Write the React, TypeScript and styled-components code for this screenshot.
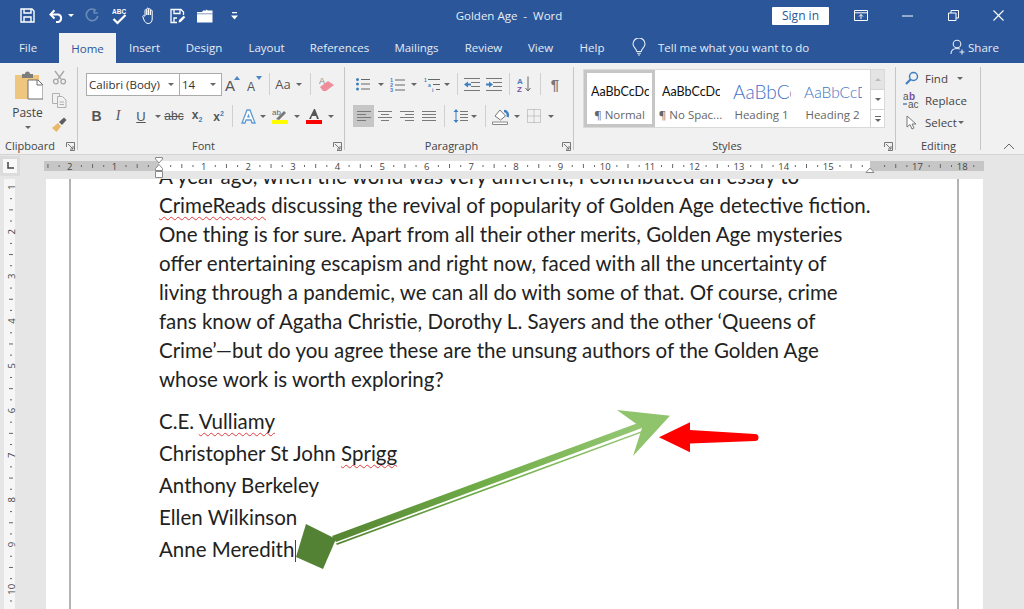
import React from "react";
import styled, { createGlobalStyle } from "styled-components";

const Global = createGlobalStyle`
  html, body { margin: 0; padding: 0; overflow: hidden; background: #e6e6e6; }
  * { box-sizing: border-box; }
`;

const UI_FONT = `"Open Sans", "Noto Sans", sans-serif`;

const Window = styled.div`
  position: relative;
  width: 1024px;
  height: 609px;
  overflow: hidden;
  display: flex;
  flex-direction: column;
  font-family: ${UI_FONT};
`;

const TitleBar = styled.div`
  height: 31px;
  background: #2b579a;
  display: flex;
  align-items: center;
  color: #fff;
  flex-shrink: 0;
`;

const Slot = styled.span<{ $w: number; $h?: number }>`
  width: ${(p) => p.$w}px;
  ${(p) => (p.$h ? `height: ${p.$h}px;` : "")}
  flex-shrink: 0;
  display: flex;
  align-items: center;
  justify-content: center;
`;

const Title = styled.div`
  width: 524px;
  text-align: center;
  font-size: 11.5px;
  color: #e8edf5;
  white-space: pre;
`;

const SignIn = styled.button`
  width: 57px;
  height: 18px;
  border: 0;
  border-radius: 1px;
  background: #fff;
  color: #2b579a;
  font: 12px ${UI_FONT};
  padding: 0;
`;

const TabBar = styled.div`
  height: 32px;
  background: #2b579a;
  display: flex;
  align-items: stretch;
  flex-shrink: 0;
`;

const Tab = styled.div<{ $w: number; $active?: boolean }>`
  width: ${(p) => p.$w}px;
  display: flex;
  align-items: center;
  justify-content: center;
  font-size: 11.5px;
  color: ${(p) => (p.$active ? "#2b579a" : "#e6ebf4")};
  background: ${(p) => (p.$active ? "#f1f1f1" : "transparent")};
  margin-top: ${(p) => (p.$active ? "2px" : "0")};
  flex-shrink: 0;
  white-space: nowrap;
`;

const TellMe = styled.div`
  display: flex;
  align-items: center;
  font-size: 11.5px;
  color: #e6ebf4;
  width: 290px;
  flex-shrink: 0;
`;

const Ribbon = styled.div`
  height: 92px;
  background: #f1f1f1;
  border-bottom: 1px solid #d4d4d4;
  display: flex;
  flex-shrink: 0;
`;

const Group = styled.div<{ $w: number }>`
  position: relative;
  width: ${(p) => p.$w}px;
  height: 87px;
  margin-top: 4px;
  flex-shrink: 0;
  display: flex;
  flex-direction: column;

  &::after {
    content: "";
    position: absolute;
    right: 0;
    top: 0;
    bottom: 4px;
    width: 1px;
    background: #c6c6c6;
  }
`;

const GroupBody = styled.div`
  flex: 1;
  display: flex;
  min-height: 0;
`;

const GroupLabel = styled.div<{ $pr?: number }>`
  height: 16px;
  line-height: 16px;
  text-align: center;
  font-size: 11px;
  color: #444;
  padding-right: ${(p) => p.$pr ?? 16}px;
`;

const Launcher = styled.svg`
  position: absolute;
  right: 3px;
  bottom: 3px;
  width: 9px;
  height: 9px;
`;

const Column = styled.div`
  display: flex;
  flex-direction: column;
`;

const Row = styled.div<{ $h?: number; $pl?: number }>`
  display: flex;
  align-items: center;
  height: ${(p) => p.$h ?? 31}px;
  padding-left: ${(p) => p.$pl ?? 0}px;
`;

const PasteColumn = styled(Column)`
  width: 50px;
  align-items: center;
  padding-left: 5px;
  font-size: 12px;
  color: #444;
`;

const Combo = styled.div<{ $w: number }>`
  width: ${(p) => p.$w}px;
  height: 23px;
  border: 1px solid #ababab;
  background: #fff;
  font-size: 11.5px;
  color: #333;
  display: flex;
  align-items: center;
  justify-content: space-between;
  padding: 0 5px 0 2px;
  margin-right: -1px;
  flex-shrink: 0;
`;

const Caret = styled.i<{ $color?: string; $up?: boolean }>`
  display: block;
  width: 0;
  height: 0;
  border-left: 3px solid transparent;
  border-right: 3px solid transparent;
  ${(p) =>
    p.$up
      ? `border-bottom: 3px solid ${p.$color ?? "#666"};`
      : `border-top: 3px solid ${p.$color ?? "#666"};`}
`;

const Sep = styled.span<{ $h?: number }>`
  width: 1px;
  height: ${(p) => p.$h ?? 22}px;
  background: #d0d0d0;
  flex-shrink: 0;
`;

const Glyph = styled.span<{ $weight?: number; $italic?: boolean; $size?: number; $color?: string; $family?: string; $deco?: string }>`
  font-family: ${(p) => p.$family ?? `"Liberation Sans", sans-serif`};
  font-weight: ${(p) => p.$weight ?? 400};
  font-style: ${(p) => (p.$italic ? "italic" : "normal")};
  font-size: ${(p) => p.$size ?? 13}px;
  color: ${(p) => p.$color ?? "#555"};
  text-decoration: ${(p) => p.$deco ?? "none"};
  line-height: 1;
`;

const Index = styled.span`
  color: #3f7fbf;
  font-size: 7px;
`;

const ActiveBox = styled(Slot)`
  height: 22px;
  background: #c6c6c6;
`;

const Gallery = styled.div`
  margin: 2px 0 0 9px;
  width: 302px;
  height: 59px;
  background: #fff;
  border: 1px solid #d9d9d9;
  display: flex;
  flex-shrink: 0;
`;

const StyleCard = styled.div<{ $selected?: boolean }>`
  width: 71px;
  flex-shrink: 0;
  overflow: hidden;
  display: flex;
  flex-direction: column;
  border: 3px solid ${(p) => (p.$selected ? "#c6c6c6" : "transparent")};
  background: #fff;
`;

const StylePreview = styled.div<{ $size: number; $color: string; $light?: boolean }>`
  height: 33px;
  width: 58px;
  margin: 2px 0 0 4px;
  overflow: hidden;
  white-space: nowrap;
  display: flex;
  align-items: center;
  font-family: "Lato", "Liberation Sans", sans-serif;
  font-weight: ${(p) => (p.$light ? 300 : 400)};
  font-size: ${(p) => p.$size}px;
  color: ${(p) => p.$color};
`;

const StyleName = styled.div`
  font-size: 11.5px;
  line-height: 14px;
  color: #666;
  white-space: nowrap;
  text-align: center;
`;

const Scroller = styled(Column)`
  margin-left: auto;
  width: 14px;
  border-left: 1px solid #d4d4d4;
`;

const ScrollButton = styled.div<{ $h: number; $off?: boolean }>`
  height: ${(p) => p.$h}px;
  display: flex;
  flex-direction: column;
  gap: 2px;
  align-items: center;
  justify-content: center;
  background: ${(p) => (p.$off ? "#e4e4e4" : "#fff")};
  border-bottom: 1px solid #d4d4d4;
  &:last-child { border-bottom: 0; }
`;

const ScrollBarLine = styled.i`
  display: block;
  width: 6px;
  height: 1px;
  background: #666;
`;

const EditRow = styled.div`
  height: 22px;
  display: flex;
  align-items: center;
  font-size: 11.5px;
  color: #444;
`;

const CollapseRibbon = styled.svg`
  margin: 80px 0 0 22px;
  width: 12px;
  height: 7px;
`;

const RulerBar = styled.div`
  height: 24px;
  padding-bottom: 3px;
  background: #e6e6e6;
  display: flex;
  align-items: center;
  flex-shrink: 0;
`;

const TabStop = styled.div`
  width: 20px;
  height: 20px;
  background: #f8f8f8;
  border: 3px solid #dcdcdc;
  display: flex;
  align-items: center;
  justify-content: center;
  flex-shrink: 0;
`;

const RulerTrack = styled.svg`
  margin-left: 24px;
  width: 940px;
  height: 10px;
  flex-shrink: 0;
`;

const Workspace = styled.div`
  flex: 1;
  display: flex;
  min-height: 0;
  background: #e6e6e6;
`;

const SideRuler = styled.svg`
  width: 46px;
  height: 431px;
  flex-shrink: 0;
`;

const Sheet = styled.div`
  width: 937px;
  background: #fff;
  flex-shrink: 0;
  padding-left: 23px;
  overflow: hidden;
  display: flex;
`;

const TextFrame = styled.div`
  width: 890px;
  border-left: 2px solid #b4b4b4;
  border-right: 2px solid #b4b4b4;
  padding-left: 88px;
  font-family: "Lato", "Liberation Sans", sans-serif;
  font-size: 20.5px;
  color: #222;
`;

const Paragraph = styled.p`
  margin: -17px 0 11px;
  line-height: 29px;
  white-space: nowrap;
`;

const ListLine = styled.div`
  height: 32px;
  line-height: 32px;
  white-space: nowrap;
`;

const Squiggle = styled.span`
  text-decoration: underline wavy #e23b3b 1px;
  text-underline-offset: 3px;
  text-decoration-skip-ink: none;
`;

const TextCaret = styled.span`
  display: inline-block;
  width: 1px;
  height: 22px;
  margin-left: 1px;
  background: #444;
  vertical-align: -5px;
`;

const Overlay = styled.svg`
  position: absolute;
  left: 0;
  top: 0;
  width: 1024px;
  height: 609px;
  pointer-events: none;
`;

// icons

const SaveIcon = () => (
  <svg width="15" height="15" viewBox="0 0 15 15" fill="none" stroke="#fff" strokeWidth="1.4">
    <path d="M1 1h11l2 2v11H1z" />
    <path d="M4 1v4h7V1M4 14V9h7v5" />
  </svg>
);

const UndoIcon = () => (
  <svg width="16" height="14" viewBox="0 0 16 14" fill="none" stroke="#fff" strokeWidth="2">
    <path d="M1.500 5.500h8a4 4 0 0 1 0 7.500H7" />
    <path d="M5.500 1.200 1.500 5.500l4 4" />
  </svg>
);

const RedoIcon = () => (
  <svg width="14" height="15" viewBox="0 0 14 15" fill="none" stroke="#6c8bb8" strokeWidth="1.6">
    <path d="M11 2.500A5.800 5.800 0 1 0 12.800 8" />
    <path d="M9.200 1v4h3.600" />
  </svg>
);

const SpellIcon = () => (
  <svg width="16" height="18" viewBox="0 0 16 18" fill="none">
    <text x="0" y="6.500" fontSize="6.500" fontWeight="700" fontFamily="Liberation Sans" fill="#fff">ABC</text>
    <path d="M1.500 12l4 4 8-8" stroke="#fff" strokeWidth="2.200" />
  </svg>
);

const HandIcon = () => (
  <svg width="13" height="17" viewBox="0 0 13 17" fill="none" stroke="#fff" strokeWidth="1">
    <path d="M3 9V3.500a.9.9 0 0 1 1.800 0V8V2a.9.9 0 0 1 1.800 0v6V2.600a.9.9 0 0 1 1.800 0V8V4a.9.9 0 0 1 1.800 0v8c0 3-1.800 4.500-4 4.500S3 15 2 13L.8 9.600c-.3-1 1-1.400 1.500-.6z" />
  </svg>
);

const SaveAsIcon = () => (
  <svg width="16" height="16" viewBox="0 0 16 16" fill="none" stroke="#fff" strokeWidth="1.3">
    <path d="M7 14.500H1v-13h10l2.500 2.500v3" />
    <path d="M4 1.500v4h6v-4M4 14v-4h3" />
    <path d="M8.500 14.500l.6-2.400 4.600-4.400 1.600 1.600-4.500 4.600z" fill="#fff" stroke="none" />
  </svg>
);

const FolderIcon = () => (
  <svg width="16" height="14" viewBox="0 0 16 14" fill="#fff">
    <path d="M0 3h5l1-1.500h3V.5l2 1h4.500V13.500H0z" />
    <path d="M0 4.800h15.500" stroke="#2b579a" strokeWidth=".6" />
  </svg>
);

const CustomizeIcon = () => (
  <svg width="7" height="8" viewBox="0 0 7 8" fill="#fff">
    <path d="M1 0h5v1.200H1zM0 3.500h7L3.500 7.500z" />
  </svg>
);

const RibbonDisplayIcon = () => (
  <svg width="14" height="11" viewBox="0 0 14 11" fill="none" stroke="#fff">
    <path d="M.5.500h13v10H.5zM.5 2.800h13" />
    <path d="M7 9V4.500M5 6.500l2-2 2 2" />
  </svg>
);

const MinimizeIcon = () => (
  <svg width="11" height="2" viewBox="0 0 11 2"><path d="M0 1h11" stroke="#fff" /></svg>
);

const RestoreIcon = () => (
  <svg width="11" height="11" viewBox="0 0 11 11" fill="none" stroke="#fff">
    <path d="M.5 3h7.500v7.500H.5zM3 3V.5h7.500V8H8" />
  </svg>
);

const CloseIcon = () => (
  <svg width="11" height="11" viewBox="0 0 11 11" stroke="#fff" strokeWidth="1.100">
    <path d="M.5.500l10 10M10.500.500l-10 10" />
  </svg>
);

const BulbIcon = () => (
  <svg width="14" height="18" viewBox="0 0 14 18" fill="none" stroke="#e6ebf4" strokeWidth="1.100">
    <path d="M4.800 13.500C4.500 10.500 1 9.500 1 6a6 6 0 0 1 12 0c0 3.500-3.500 4.500-3.800 7.500z" />
    <path d="M5 15.300h4M6 17h2" />
  </svg>
);

const ShareIcon = () => (
  <svg width="16" height="16" viewBox="0 0 16 16" fill="none" stroke="#e6ebf4" strokeWidth="1.100">
    <circle cx="7" cy="5" r="3.800" />
    <path d="M1 15c0-3.500 2.500-5.500 6-5.500 1 0 2 .2 2.800.6" />
    <path d="M12 10.500v5M9.500 13h5" />
  </svg>
);

const PasteIcon = () => (
  <svg width="30" height="30" viewBox="0 0 30 30">
    <path d="M2 4h24v24H2z" fill="#efc67e" />
    <path d="M9 3h3a2.500 2.500 0 0 1 5 0h3v4H9z" fill="#7d7d7d" />
    <path d="M16 9h10l5 5v14H16z" fill="#fff" stroke="#6e6e6e" transform="translate(-1 0)" />
    <path d="M25 9v5h5" fill="none" stroke="#6e6e6e" transform="translate(-1 0)" />
  </svg>
);

const CutIcon = () => (
  <svg width="15" height="15" viewBox="0 0 15 15" fill="none" stroke="#a6a6a6" strokeWidth="1.300">
    <path d="M3 1l6 8M12 1L6 9" />
    <circle cx="3.800" cy="11.500" r="2.300" />
    <circle cx="11.200" cy="11.500" r="2.300" />
  </svg>
);

const CopyIcon = () => (
  <svg width="15" height="15" viewBox="0 0 15 15" fill="#f1f1f1" stroke="#b0b0b0">
    <path d="M.5.500h7l0 3v7h-7z" />
    <path d="M5.500 3.500h5l3.500 3.500v7.500H5.500z" />
    <path d="M7.500 9h4.500M7.500 11.500h4.500" />
  </svg>
);

const BrushIcon = () => (
  <svg width="16" height="15" viewBox="0 0 16 15">
    <path d="M1 11l6-5 3 3.500-4.500 5.500z" fill="#e8b868" />
    <path d="M8 5l5-4.500 2.500 2.500-4.500 5z" fill="#5f5f5f" />
  </svg>
);

const Launch = () => (
  <Launcher viewBox="0 0 9 9" fill="none" stroke="#777">
    <path d="M.5 5V.5h8v8H4" />
    <path d="M2 2l5 5M7 4v3H4" />
  </Launcher>
);

const GrowIcon = ({ up, size }: { up: boolean; size: number }) => (
  <svg width="18" height="18" viewBox="0 0 18 18">
    <text x="1" y="16" fontSize={size} fontFamily="Liberation Sans" fill="#555">A</text>
    <path d={up ? "M10 5l3-4 3 4z" : "M10 1h6l-3 4z"} fill="#4a86c5" />
  </svg>
);

const EraserIcon = () => (
  <svg width="16" height="16" viewBox="0 0 16 16">
    <text x="0" y="8" fontSize="9" fontFamily="Liberation Sans" fill="#888">A</text>
    <path d="M1 11l8-6 6 4-8 6H4z" fill="#ef8d9a" />
  </svg>
);

const TextEffect = () => (
  <svg width="15" height="15" viewBox="0 0 15 15">
    <path d="M6 1h3l5 13H11l-1-3H5l-1 3H1z" fill="#fff" stroke="#5f9bd5" strokeWidth="1.300" />
    <path d="M6 8.500l1.500-4 1.500 4z" fill="#5f9bd5" />
  </svg>
);

const HighlightIcon = () => (
  <svg width="16" height="16" viewBox="0 0 16 16">
    <text x="0" y="7" fontSize="8" fontFamily="Liberation Sans" fill="#666">ab</text>
    <path d="M4 11l8-8 2 2-7 7z" fill="#777" />
    <path d="M0 12h16v4H0z" fill="#ffff00" />
  </svg>
);

const FontColorIcon = () => (
  <svg width="16" height="16" viewBox="0 0 16 16">
    <path d="M8 1h1l4 10h-2l-1-3H6l-1 3H3z" fill="#555" />
    <path d="M0 12h16v4H0z" fill="#ff0000" />
  </svg>
);

const BulletsIcon = () => (
  <svg width="14" height="14" viewBox="0 0 14 14">
    <circle cx="1.500" cy="2.500" r="1.500" fill="#3f7fbf" />
    <circle cx="1.500" cy="7" r="1.500" fill="#3f7fbf" />
    <circle cx="1.500" cy="12" r="1.500" fill="#3f7fbf" />
    <path d="M5 2.500h9M5 7h9M5 12h9" stroke="#666" />
  </svg>
);

const NumberingIcon = () => (
  <svg width="15" height="15" viewBox="0 0 15 15">
    <text x="0" y="5" fontSize="5.500" fill="#3f7fbf" fontFamily="Liberation Sans" fontWeight="700">1</text>
    <text x="0" y="10" fontSize="5.500" fill="#3f7fbf" fontFamily="Liberation Sans" fontWeight="700">2</text>
    <text x="0" y="15" fontSize="5.500" fill="#3f7fbf" fontFamily="Liberation Sans" fontWeight="700">3</text>
    <path d="M5 3h10M5 8h10M5 13h10" stroke="#666" />
  </svg>
);

const MultilevelIcon = () => (
  <svg width="16" height="15" viewBox="0 0 16 15">
    <text x="0" y="5" fontSize="5" fill="#3f7fbf" fontFamily="Liberation Sans" fontWeight="700">1</text>
    <text x="4" y="10" fontSize="5" fill="#3f7fbf" fontFamily="Liberation Sans" fontWeight="700">a</text>
    <text x="8" y="15" fontSize="5" fill="#3f7fbf" fontFamily="Liberation Sans" fontWeight="700">i</text>
    <path d="M4 2.500h12M9 7.500h7M12 12.500h4" stroke="#666" />
  </svg>
);

const IndentIcon = ({ out }: { out: boolean }) => (
  <svg width="16" height="13" viewBox="0 0 16 13">
    <path d="M0 .500h16M7 4.500h9M7 8.500h9M0 12.500h16" stroke="#777" />
    <path d={out ? "M0 6.500l4-3v2h3v2H4v2z" : "M7 6.500l-4-3v2H0v2h3v2z"} fill="#3f7fbf" />
  </svg>
);

const SortIcon = () => (
  <svg width="16" height="16" viewBox="0 0 16 16">
    <text x="0" y="7.500" fontSize="8" fontWeight="700" fontFamily="Liberation Sans" fill="#3f7fbf">A</text>
    <text x="0" y="15.500" fontSize="8" fontWeight="700" fontFamily="Liberation Sans" fill="#7c4fa3">Z</text>
    <path d="M11 .500v14M8.500 12l2.500 3 2.500-3" stroke="#666" fill="none" />
  </svg>
);

const AlignIcon = ({ kind }: { kind: "left" | "center" | "right" | "justify" }) => {
  const lines = {
    left: [[0, 14], [0, 9], [0, 14], [0, 9]],
    center: [[0, 14], [3, 11], [0, 14], [3, 11]],
    right: [[0, 14], [5, 14], [0, 14], [5, 14]],
    justify: [[0, 14], [0, 14], [0, 14], [0, 14]],
  }[kind];
  return (
    <svg width="14" height="12" viewBox="0 0 14 12" stroke="#7a7a7a">
      {lines.map(([a, b], i) => (
        <path key={i} d={`M${a} ${1.5 + i * 3}H${b}`} />
      ))}
    </svg>
  );
};

const LineSpacingIcon = () => (
  <svg width="15" height="16" viewBox="0 0 15 16">
    <path d="M3 1l2.500 3h-5zM3 15l2.500-3h-5z" fill="#3f7fbf" />
    <path d="M3 3v10" stroke="#3f7fbf" />
    <path d="M7 3.500h8M7 6.500h8M7 9.500h8M7 12.500h8" stroke="#777" />
  </svg>
);

const ShadingIcon = () => (
  <svg width="17" height="17" viewBox="0 0 17 17">
    <path d="M3 8l5-6 5.500 6-5 4z" fill="#fff" stroke="#777" />
    <path d="M12 3c3 0 4.500 3 3.500 6" stroke="#3f7fbf" strokeWidth="2.400" fill="none" />
    <path d="M.5 14h15v2.500H.5z" fill="#fff" stroke="#888" />
  </svg>
);

const BordersIcon = () => (
  <svg width="14" height="14" viewBox="0 0 14 14" fill="none" stroke="#a0a0a0" strokeDasharray="1 1">
    <path d="M.5.500h13v13H.5zM7 .500v13M.5 7h13" />
  </svg>
);

const FindIcon = () => (
  <svg width="14" height="14" viewBox="0 0 14 14" fill="none" stroke="#3f7fbf" strokeWidth="1.500">
    <circle cx="8.500" cy="5.500" r="4" />
    <path d="M5.500 8.500L1 13" strokeWidth="2.200" />
  </svg>
);

const ReplaceIcon = () => (
  <svg width="17" height="17" viewBox="0 0 17 17">
    <text x="0" y="8" fontSize="10" fill="#555" fontFamily="Liberation Sans">a</text>
    <text x="6" y="8" fontSize="10" fill="#7c4fa3" fontWeight="700" fontFamily="Liberation Sans">b</text>
    <text x="5" y="16" fontSize="10" fill="#555" fontFamily="Liberation Sans">ac</text>
    <path d="M0 12h4" stroke="#3f7fbf" strokeWidth="1.400" />
  </svg>
);

const SelectIcon = () => (
  <svg width="11" height="15" viewBox="0 0 11 15" fill="#fff" stroke="#777">
    <path d="M1 1v11l3-2.500 2 4.500 2-1-2-4h4z" />
  </svg>
);

const Ruler = () => {
  const unit = 44.62;
  const zero = 115;
  const marks: React.ReactNode[] = [];
  for (let u = -3; u <= 18; u++) {
    const x = zero + u * unit;
    if (u !== 0 && u !== 16 && u !== -3) {
      marks.push(
        <text key={`n${u}`} x={x} y={8.500} fontSize="9.500" textAnchor="middle" fill="#444" fontFamily="Open Sans">
          {Math.abs(u)}
        </text>
      );
    }
    for (const [frac, h] of [[0.25, 1], [0.5, 3], [0.75, 1]] as const) {
      const tx = x + frac * unit;
      if (tx > 0 && tx < 936) {
        marks.push(<rect key={`t${u}${frac}`} x={tx} y={5 - h / 2 - 0.5} width="1" height={h + 1} fill="#666" />);
      }
    }
  }
  return (
    <RulerTrack viewBox="0 0 940 10">
      <rect x="0" y="0" width="115" height="10" fill="#c6c6c6" />
      <rect x="115" y="0" width="711" height="10" fill="#fff" />
      <rect x="826" y="0" width="114" height="10" fill="#c6c6c6" />
      {marks}
    </RulerTrack>
  );
};

const RulerMarkers = () => (
  <g fill="#fff" stroke="#8a8a8a">
    <path d="M155.500 157.500h7v1.500l-3.500 4-3.500-4z" />
    <path d="M155.500 170.500v-2l3.500-4 3.500 4v2z" />
    <path d="M155.500 171.500h7v6h-7z" />
    <path d="M866 172.500l4-4.500 4 4.500z" />
  </g>
);

const VerticalMarks = () => {
  const marks: React.ReactNode[] = [];
  for (let u = 0; u <= 10; u++) {
    const y = 8 + (u - 1) * 44.7;
    if (u > 0) {
      marks.push(
        <text
          key={`v${u}`}
          x={0}
          y={0}
          fontSize="9.500"
          textAnchor="middle"
          fill="#444"
          fontFamily="Open Sans"
          transform={`translate(14.500 ${y}) rotate(-90)`}
        >
          {u}
        </text>
      );
    }
    for (const [frac, w] of [[0.25, 1], [0.5, 3], [0.75, 1]] as const) {
      marks.push(<rect key={`m${u}${frac}`} x={10.500 - w / 2} y={y + frac * 44.7} width={w + 1} height="1" fill="#666" />);
    }
  }
  return (
    <SideRuler viewBox="0 0 46 431">
      <rect x="4" y="0" width="11" height="431" fill="#f6f6f6" />
      {marks}
    </SideRuler>
  );
};

const Annotations = () => (
  <Overlay viewBox="0 0 1024 609">
    <defs>
      <linearGradient id="shaft" gradientUnits="userSpaceOnUse" x1="300" y1="550" x2="670" y2="415">
        <stop offset="0" stopColor="#4f7b2e" />
        <stop offset="0.5" stopColor="#70ad47" />
        <stop offset="1" stopColor="#9ccc7c" />
      </linearGradient>
    </defs>
    <path d="M306 524L336 539L323 569L296 557z" fill="#548235" />
    <path d="M332 536L638 423L642 428L336 542z" fill="url(#shaft)" />
    <path d="M336 543.500L642 431L642 432.500L337 545z" fill="url(#shaft)" />
    <path d="M670 415.700L617 410L642 428L633 456z" fill="#90c46c" />
    <path d="M659 437.300L690 422.300V430L755 434A3.400 3.400 0 0 1 755 441L690 443.500V452.300z" fill="#ff0000" />
  </Overlay>
);

export default function App() {
  return (
    <Window>
      <Global />
      <TitleBar>
        <Slot $w={14} />
        <Slot $w={26}><SaveIcon /></Slot>
        <Slot $w={5} />
        <Slot $w={24}><UndoIcon /></Slot>
        <Slot $w={4}><Caret $color="#fff" /></Slot>
        <Slot $w={38}><RedoIcon /></Slot>
        <Slot $w={18}><SpellIcon /></Slot>
        <Slot $w={38}><HandIcon /></Slot>
        <Slot $w={22}><SaveAsIcon /></Slot>
        <Slot $w={32}><FolderIcon /></Slot>
        <Slot $w={26}><CustomizeIcon /></Slot>
        <Title>{"Golden Age  -  Word"}</Title>
        <Slot $w={1} />
        <SignIn>Sign in</SignIn>
        <Slot $w={11} />
        <Slot $w={42}><RibbonDisplayIcon /></Slot>
        <Slot $w={50}><MinimizeIcon /></Slot>
        <Slot $w={42}><RestoreIcon /></Slot>
        <Slot $w={48}><CloseIcon /></Slot>
      </TitleBar>

      <TabBar>
        <Tab $w={56}>File</Tab>
        <Slot $w={3} />
        <Tab $w={57} $active>Home</Tab>
        <Tab $w={57}>Insert</Tab>
        <Tab $w={62}>Design</Tab>
        <Tab $w={63}>Layout</Tab>
        <Tab $w={83}>References</Tab>
        <Tab $w={71}>Mailings</Tab>
        <Tab $w={63}>Review</Tab>
        <Tab $w={51}>View</Tab>
        <Tab $w={52}>Help</Tab>
        <Slot $w={2} />
        <Slot $w={38}><BulbIcon /></Slot>
        <TellMe>Tell me what you want to do</TellMe>
        <Slot $w={20}><ShareIcon /></Slot>
        <Tab $w={31}>Share</Tab>
      </TabBar>

      <Ribbon>
        <Group $w={78}>
          <GroupBody>
            <PasteColumn>
              <Row $h={37}><PasteIcon /></Row>
              <div>Paste</div>
              <Row $h={12}><Caret /></Row>
            </PasteColumn>
            <Column>
              <Slot $w={18} $h={21}><CutIcon /></Slot>
              <Slot $w={18} $h={24}><CopyIcon /></Slot>
              <Slot $w={18} $h={24}><BrushIcon /></Slot>
            </Column>
          </GroupBody>
          <GroupLabel $pr={18}>Clipboard</GroupLabel>
          <Launch />
        </Group>

        <Group $w={267}>
          <GroupBody>
            <Column>
              <Row $h={34} $pl={8}>
                <Combo $w={94}>Calibri (Body)<Caret /></Combo>
                <Combo $w={43}>14<Caret /></Combo>
                <Slot $w={23}><GrowIcon up size={15} /></Slot>
                <Slot $w={21}><GrowIcon up={false} size={12} /></Slot>
                <Slot $w={4} />
                <Sep />
                <Slot $w={26}><Glyph $size={13} $family={UI_FONT}>Aa</Glyph></Slot>
                <Slot $w={6}><Caret /></Slot>
                <Slot $w={8} />
                <Sep />
                <Slot $w={32}><EraserIcon /></Slot>
              </Row>
              <Row $h={30} $pl={8}>
                <Slot $w={21}><Glyph $weight={700} $size={14}>B</Glyph></Slot>
                <Slot $w={22}><Glyph $italic $size={14} $family={`"Liberation Serif", serif`}>I</Glyph></Slot>
                <Slot $w={24}><Glyph $size={13} $deco="underline">U</Glyph></Slot>
                <Slot $w={9}><Caret /></Slot>
                <Slot $w={24}><Glyph $size={12} $deco="line-through">abc</Glyph></Slot>
                <Slot $w={22}><Glyph $weight={700} $size={12}>x<Index as="sub">2</Index></Glyph></Slot>
                <Slot $w={21}><Glyph $weight={700} $size={12}>x<Index as="sup">2</Index></Glyph></Slot>
                <Slot $w={3} />
                <Sep />
                <Slot $w={3} />
                <Slot $w={24}><TextEffect /></Slot>
                <Slot $w={6}><Caret /></Slot>
                <Slot $w={28}><HighlightIcon /></Slot>
                <Slot $w={6}><Caret /></Slot>
                <Slot $w={28}><FontColorIcon /></Slot>
                <Slot $w={6}><Caret /></Slot>
              </Row>
            </Column>
          </GroupBody>
          <GroupLabel>Font</GroupLabel>
          <Launch />
        </Group>

        <Group $w={229}>
          <GroupBody>
            <Column>
              <Row $h={34} $pl={9}>
                <Slot $w={18}><BulletsIcon /></Slot>
                <Slot $w={17}><Caret /></Slot>
                <Slot $w={17}><NumberingIcon /></Slot>
                <Slot $w={16}><Caret /></Slot>
                <Slot $w={19}><MultilevelIcon /></Slot>
                <Slot $w={11}><Caret /></Slot>
                <Slot $w={5} />
                <Sep />
                <Slot $w={28}><IndentIcon out /></Slot>
                <Slot $w={16}><IndentIcon out={false} /></Slot>
                <Slot $w={7} />
                <Sep />
                <Slot $w={30}><SortIcon /></Slot>
                <Sep />
                <Slot $w={28}><Glyph $size={15} $weight={700} $color="#777">¶</Glyph></Slot>
              </Row>
              <Row $h={30} $pl={8}>
                <ActiveBox $w={21}><AlignIcon kind="left" /></ActiveBox>
                <Slot $w={22}><AlignIcon kind="center" /></Slot>
                <Slot $w={22}><AlignIcon kind="right" /></Slot>
                <Slot $w={22}><AlignIcon kind="justify" /></Slot>
                <Slot $w={4} />
                <Sep />
                <Slot $w={4} />
                <Slot $w={22}><LineSpacingIcon /></Slot>
                <Slot $w={6}><Caret /></Slot>
                <Slot $w={8} />
                <Sep />
                <Slot $w={28}><ShadingIcon /></Slot>
                <Slot $w={6}><Caret /></Slot>
                <Slot $w={28}><BordersIcon /></Slot>
                <Slot $w={6}><Caret /></Slot>
              </Row>
            </Column>
          </GroupBody>
          <GroupLabel>Paragraph</GroupLabel>
          <Launch />
        </Group>

        <Group $w={322}>
          <GroupBody>
            <Gallery>
              <StyleCard $selected>
                <StylePreview $size={12.500} $color="#111">AaBbCcDc</StylePreview>
                <StyleName>¶ Normal</StyleName>
              </StyleCard>
              <StyleCard>
                <StylePreview $size={12.500} $color="#111">AaBbCcDc</StylePreview>
                <StyleName>¶ No Spac...</StyleName>
              </StyleCard>
              <StyleCard>
                <StylePreview $size={19} $color="#4472c4" $light>AaBbCc</StylePreview>
                <StyleName>Heading 1</StyleName>
              </StyleCard>
              <StyleCard>
                <StylePreview $size={15.500} $color="#4472c4" $light>AaBbCcD</StylePreview>
                <StyleName>Heading 2</StyleName>
              </StyleCard>
              <Scroller>
                <ScrollButton $h={20} $off><Caret $up $color="#bbb" /></ScrollButton>
                <ScrollButton $h={20}><Caret /></ScrollButton>
                <ScrollButton $h={17}><ScrollBarLine /><Caret /></ScrollButton>
              </Scroller>
            </Gallery>
          </GroupBody>
          <GroupLabel>Styles</GroupLabel>
          <Launch />
        </Group>

        <Group $w={85}>
          <GroupBody>
            <Column>
              <EditRow><Slot $w={2} /><Slot $w={27}><FindIcon /></Slot>Find<Slot $w={24}><Caret /></Slot></EditRow>
              <EditRow><Slot $w={2} /><Slot $w={27}><ReplaceIcon /></Slot>Replace</EditRow>
              <EditRow><Slot $w={2} /><Slot $w={27}><SelectIcon /></Slot>Select<Slot $w={8}><Caret /></Slot></EditRow>
            </Column>
          </GroupBody>
          <GroupLabel $pr={0}>Editing</GroupLabel>
        </Group>

        <CollapseRibbon viewBox="0 0 12 7" fill="none" stroke="#666">
          <path d="M1 6l5-5 5 5" />
        </CollapseRibbon>
      </Ribbon>

      <RulerBar>
        <TabStop>
          <svg width="7" height="7" viewBox="0 0 7 7"><path d="M1 0v6h6" fill="none" stroke="#444" strokeWidth="1.500" /></svg>
        </TabStop>
        <Ruler />
      </RulerBar>

      <Workspace>
        <VerticalMarks />
        <Sheet>
          <TextFrame>
            <Paragraph>
              A year ago, when the world was very different, I contributed an essay to<br />
              <Squiggle>CrimeReads</Squiggle> discussing the revival of popularity of Golden Age detective fiction.<br />
              One thing is for sure. Apart from all their other merits, Golden Age mysteries<br />
              offer entertaining escapism and right now, faced with all the uncertainty of<br />
              living through a pandemic, we can all do with some of that. Of course, crime<br />
              fans know of Agatha Christie, Dorothy L. Sayers and the other ‘Queens of<br />
              Crime’—but do you agree these are the unsung authors of the Golden Age<br />
              whose work is worth exploring?
            </Paragraph>
            <ListLine>C.E. <Squiggle>Vulliamy</Squiggle></ListLine>
            <ListLine>Christopher St John <Squiggle>Sprigg</Squiggle></ListLine>
            <ListLine>Anthony Berkeley</ListLine>
            <ListLine>Ellen Wilkinson</ListLine>
            <ListLine>Anne Meredith<TextCaret /></ListLine>
          </TextFrame>
        </Sheet>
      </Workspace>

      <Overlay viewBox="0 0 1024 609"><RulerMarkers /></Overlay>
      <Annotations />
    </Window>
  );
}
